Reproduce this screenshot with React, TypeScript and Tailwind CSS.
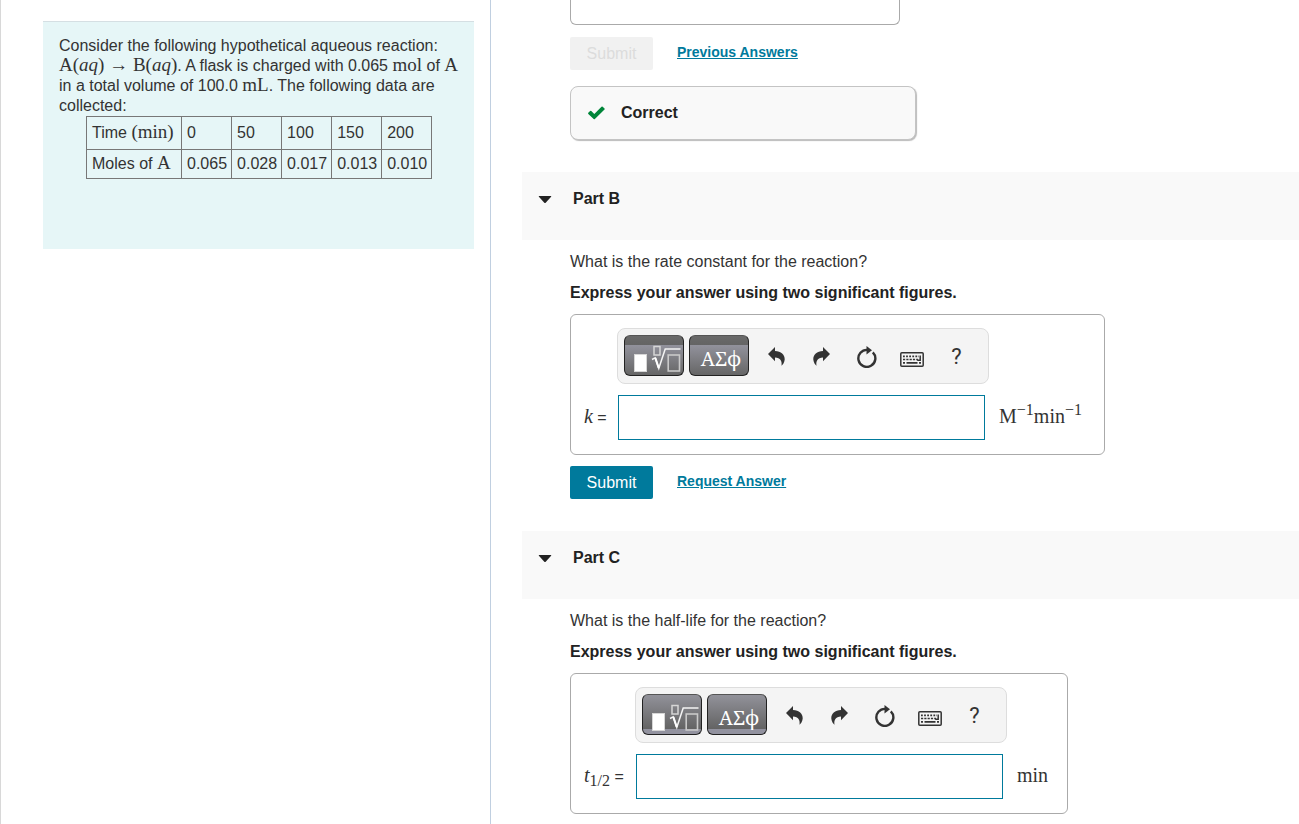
import { useState } from "react";
import type { ReactNode } from "react";

const TIMES = ["0", "50", "100", "150", "200"];
const MOLES = ["0.065", "0.028", "0.017", "0.013", "0.010"];

function Tex({ children }: { children: ReactNode }) {
  return (
    <span className="font-['Liberation_Serif',serif] text-[19px] leading-4">
      {children}
    </span>
  );
}

function FieldTex({ children }: { children: ReactNode }) {
  return (
    <span className="font-['Liberation_Serif',serif] text-xl leading-none">
      {children}
    </span>
  );
}

function CheckIcon() {
  return (
    <svg width="17" height="14" viewBox="0 0 17 14" fill="#008539" aria-hidden="true">
      <path d="M.3 6.700L2.100 4.900q.6-.5 1.200 0L6.300 7.900 13.500.7q.6-.5 1.200 0l1.800 1.700q.6.600 0 1.200L6.900 13q-.6.500-1.200 0L.3 7.900q-.5-.6 0-1.200z" />
    </svg>
  );
}

function TemplateIcon() {
  return (
    <svg width="58" height="39" viewBox="0 0 58 39" fill="none" aria-hidden="true">
      <rect x="9.5" y="18.5" width="12" height="17" fill="#fff" stroke="#d6d6d6" />
      <rect x="29" y="10.500" width="6" height="8.500" stroke="#d6d6d6" strokeWidth="1.500" />
      <path d="M27 23.500l3.200-1.600 3.600 10.400 6.400-19.300h15.300" stroke="#f4f4f4" strokeWidth="1.5" />
      <path d="M30.400 22l3.300 10" stroke="#fff" strokeWidth="2" />
      <rect x="43.200" y="19" width="11.300" height="16" stroke="#c9c9c9" strokeWidth="1.600" />
    </svg>
  );
}

const UNDO = "M0 7L7 0v4c6 0 10 3.600 9.700 8.600-.2 3-2 5.400-3.200 6.200C14.200 14.500 12.500 10.600 7 10.600V14.200z";

function UndoIcon() {
  return (
    <svg width="17" height="19" viewBox="0 0 17 19" fill="#333" aria-hidden="true">
      <path d={UNDO} />
    </svg>
  );
}

function RedoIcon() {
  return (
    <svg width="17" height="19" viewBox="0 0 17 19" fill="#333" aria-hidden="true">
      <path d={UNDO} transform="matrix(-1 0 0 1 17 0)" />
    </svg>
  );
}

function ResetIcon() {
  return (
    <svg width="20" height="22" viewBox="0 0 20 22" fill="none" aria-hidden="true">
      <path d="M10.500 3.900A8.500 8.500 0 1 0 15.800 6.300" stroke="#333" strokeWidth="2.4" />
      <path d="M9.500 0L15 4.200 9.500 8.600z" fill="#333" />
    </svg>
  );
}

function KeyboardIcon() {
  return (
    <svg width="24" height="15" viewBox="0 0 24 15" fill="none" aria-hidden="true">
      <rect x=".8" y=".8" width="22.4" height="13.4" rx="1" stroke="#333" strokeWidth="1.5" />
      <path d="M3 4.300h16" stroke="#333" strokeWidth="1.7" strokeDasharray="1.8 1.3" />
      <path d="M3 7.500h15" stroke="#333" strokeWidth="1.7" strokeDasharray="2.2 1.100" />
      <path d="M20.200 3.400v4.800h-3" stroke="#333" strokeWidth="1.500" />
      <path d="M3 10.900h2m1.500 0h11m1.500 0h2" stroke="#333" strokeWidth="1.700" />
    </svg>
  );
}

const ICON_BUTTON = "flex h-[43px] w-[45px] items-center justify-center";
const DARK_BUTTON =
  "flex h-[41px] w-[60px] items-center justify-center rounded-md border border-[#222] border-t-[#555] text-white";
const SHADE_TOP =
  "bg-[linear-gradient(#6a6a6a_0,#646464_9px,#92929c_9px,#666_100%)]";
const SHADE_BOTTOM =
  "bg-[linear-gradient(#92929a_0,#636363_34px,#92929f_34px,#92929f_100%)]";

function Toolbar({ shade }: { shade: string }) {
  return (
    <div className="flex h-14 w-[372px] items-start gap-[5px] rounded-lg border border-[#ddd] bg-[#f4f4f4] pt-[6px] pl-[6px]">
      <button type="button" aria-label="Templates" className={DARK_BUTTON + " " + shade}>
        <TemplateIcon />
      </button>
      <button
        type="button"
        className={DARK_BUTTON + " pt-[6px] pl-1 font-['Noto_Serif','Liberation_Serif',serif] text-xl leading-none " + shade}
      >
        ΑΣϕ
      </button>
      <div className="flex">
        <button type="button" aria-label="Undo" className={ICON_BUTTON}>
          <UndoIcon />
        </button>
        <button type="button" aria-label="Redo" className={ICON_BUTTON}>
          <RedoIcon />
        </button>
        <button type="button" aria-label="Reset" className={ICON_BUTTON}>
          <ResetIcon />
        </button>
        <button type="button" aria-label="Keyboard shortcuts" className={ICON_BUTTON + " pt-[6px]"}>
          <KeyboardIcon />
        </button>
        <button type="button" className={ICON_BUTTON + " font-[Roboto,sans-serif] text-[22px] text-[#333]"}>
          ?
        </button>
      </div>
    </div>
  );
}

function SubmitRow({ disabled, link }: { disabled?: boolean; link: string }) {
  return (
    <div className="flex items-center gap-6">
      <button
        type="button"
        disabled={disabled}
        className="h-[33px] w-[83px] rounded-xs bg-[#007a9c] text-base text-white disabled:bg-[#f1f1f1] disabled:text-[#dcdcdc]"
      >
        Submit
      </button>
      <a href="#answers" className="pb-[3px] text-sm font-bold text-[#007a9c] underline">
        {link}
      </a>
    </div>
  );
}

function PartHeader({ title, open, onToggle }: { title: string; open: boolean; onToggle: () => void }) {
  return (
    <h2 className="mt-8 h-[68px] bg-[#f9f9f9] pt-[15px] pl-4">
      <button type="button" aria-expanded={open} onClick={onToggle} className="flex items-center gap-[21px] text-base font-bold text-[#222]">
        <svg width="14" height="9" viewBox="0 0 14 9" fill="#222" aria-hidden="true">
          <path d="M1.200 1h11.600q.9 0 .3.800L7.700 7.700q-.7.600-1.400 0L.9 1.800Q.3 1 1.200 1z" />
        </svg>
        {title}
      </button>
    </h2>
  );
}

type PartProps = {
  id: string;
  title: string;
  question: string;
  label: ReactNode;
  unit: ReactNode;
  shade: string;
  boxClass: string;
  submit?: boolean;
};

function Part({ id, title, question, label, unit, shade, boxClass, submit }: PartProps) {
  const [open, setOpen] = useState(true);
  return (
    <section>
      <PartHeader title={title} open={open} onToggle={() => setOpen(!open)} />
      {open && (
        <div className="pl-12">
          <p className="pt-[10px] text-base text-[#333]">{question}</p>
          <p className="mt-[7px] text-base font-bold text-[#222]">Express your answer using two significant figures.</p>
          <div className={"mt-[9px] mb-[11px] grid h-[141px] content-start gap-y-[11px] rounded-md border border-[#aaa] pt-[13px] " + boxClass}>
            <div className="col-start-2">
              <Toolbar shade={shade} />
            </div>
            <label htmlFor={id} className="col-start-1 row-start-2 self-center pl-[13px] whitespace-nowrap text-[#333]">
              {label}
            </label>
            <input id={id} type="text" className="row-start-2 ml-px h-[45px] w-[367px] border border-[#007a9c] bg-white px-2 outline-none" />
            <span className="row-start-2 self-center pl-[10px] whitespace-nowrap text-[#333]">{unit}</span>
          </div>
          {submit && <SubmitRow link="Request Answer" />}
        </div>
      )}
    </section>
  );
}

export default function App() {
  return (
    <div className="flex min-h-screen border-l border-[#d8d8d8] bg-white font-['Liberation_Sans',Arial,sans-serif]">
      <aside className="w-[490px] shrink-0 border-r border-[#c0cfe0] pt-[21px] pr-4 pl-[42px]">
        <div className="h-[228px] border-t border-[#d5dfe3] bg-[#e6f6f7] px-4 pt-[14px] text-base leading-5 text-[#333]">
          <p>
            Consider the following hypothetical aqueous reaction:{" "}
            <span className="whitespace-nowrap">
              <Tex>
                A(<i>aq</i>) → B(<i>aq</i>)
              </Tex>
              . A flask
            </span>{" "}
            is charged with 0.065 <Tex>mol</Tex> of <Tex>A</Tex> in a total volume of 100.0 <Tex>mL</Tex>. The following
            data are collected:
          </p>
          <table className="ml-[27px] border-collapse">
            <tbody>
              <tr className="h-[33px]">
                <th scope="row" className="w-[95px] border border-[#777] pr-1 pl-[5px] text-left font-normal whitespace-nowrap">
                  Time <Tex>(min)</Tex>
                </th>
                {TIMES.map((t) => (
                  <td key={t} className="border border-[#777] pr-1 pl-[5px]">
                    {t}
                  </td>
                ))}
              </tr>
              <tr className="h-[29px]">
                <th scope="row" className="border border-[#777] pr-1 pl-[5px] text-left font-normal whitespace-nowrap">
                  Moles of <Tex>A</Tex>
                </th>
                {MOLES.map((m) => (
                  <td key={m} className="border border-[#777] pr-1 pl-[5px]">
                    {m}
                  </td>
                ))}
              </tr>
            </tbody>
          </table>
        </div>
      </aside>
      <main className="min-w-0 flex-1 pl-[31px]">
        <div className="pl-12">
          <div className="mb-3 h-[25px] w-[330px] rounded-b-md border border-t-0 border-[#aaa]" />
          <SubmitRow disabled link="Previous Answers" />
          <div className="mt-4 flex h-[54px] w-[346px] items-center gap-4 rounded-lg border border-[#c4c4c4] bg-[#f9f9f9] pb-px pl-[17px] text-base font-bold text-[#222] shadow-[1px_1px_1px_#bbb]">
            <CheckIcon />
            Correct
          </div>
        </div>
        <Part
          id="rate-constant"
          title="Part B"
          question="What is the rate constant for the reaction?"
          shade={SHADE_TOP}
          boxClass="w-[535px] grid-cols-[46px_372px_auto]"
          submit
          label={
            <>
              <FieldTex>
                <i>k</i>
              </FieldTex>{" "}
              =
            </>
          }
          unit={
            <FieldTex>
              M<sup className="text-base">−1</sup>min<sup className="text-base">−1</sup>
            </FieldTex>
          }
        />
        <Part
          id="half-life"
          title="Part C"
          question="What is the half-life for the reaction?"
          shade={SHADE_BOTTOM}
          boxClass="w-[498px] grid-cols-[64px_372px_auto]"
          label={
            <>
              <FieldTex>
                <i>t</i>
                <sub className="text-base">1/2</sub>
              </FieldTex>{" "}
              =
            </>
          }
          unit={<FieldTex>min</FieldTex>}
        />
      </main>
    </div>
  );
}
